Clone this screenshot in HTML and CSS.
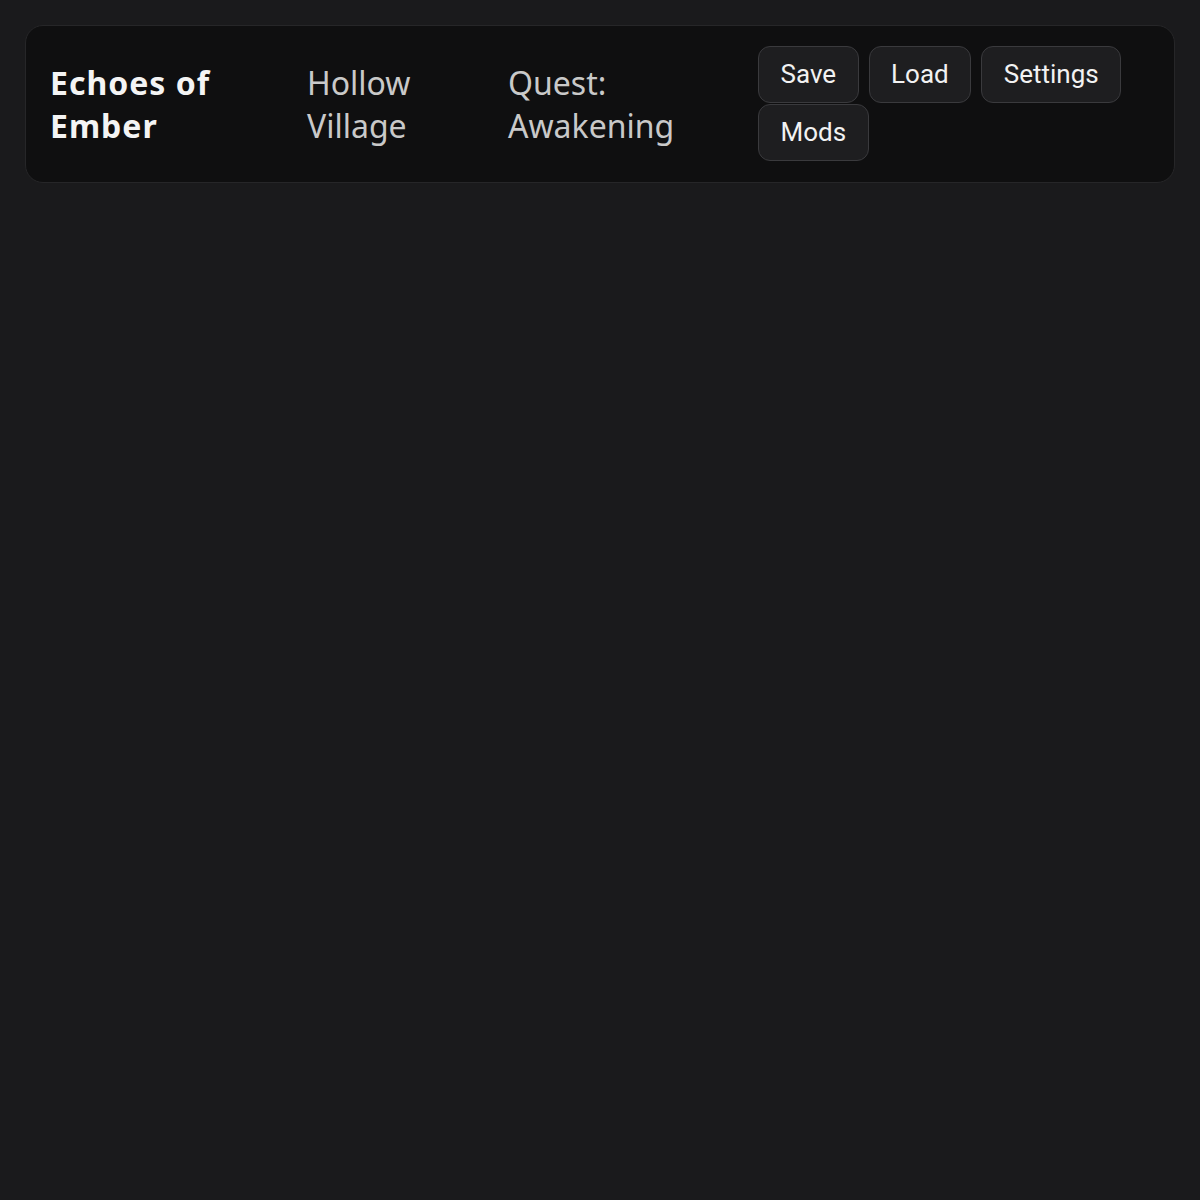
FILE: index.html
```html
<!DOCTYPE html>
<html lang="en">
<head>
<meta charset="utf-8">
<title>Echoes of Ember</title>
<link rel="stylesheet" href="styles.css">
</head>
<body>
<header class="topbar">
  <div class="title">Echoes of Ember</div>
  <div class="info">Hollow Village</div>
  <div class="info">Quest: Awakening</div>
  <nav class="actions">
    <button class="btn">Save</button>
    <button class="btn">Load</button>
    <button class="btn">Settings</button>
    <button class="btn">Mods</button>
  </nav>
</header>
</body>
</html>
```
FILE: styles.css
```css
html, body {
  margin: 0;
  padding: 0;
  background: #1a1a1c;
  height: 100%;
}
body {
  padding: 25px;
  box-sizing: border-box;
  font-family: "Noto Sans", "Open Sans", sans-serif;
}
.topbar {
  display: grid;
  grid-template-columns: 233px 177px 226px 1fr;
  column-gap: 24px;
  align-items: center;
  padding: 20px 24px 21px;
  background: #0f0f10;
  border: 1px solid #262628;
  border-radius: 18px;
}
.title {
  font-size: 32px;
  font-weight: 700;
  color: #f4f4f4;
  letter-spacing: 1px;
}
.info {
  font-size: 32px;
  color: #c9c9c9;
}
.actions {
  display: flex;
  flex-wrap: wrap;
  column-gap: 10px;
  row-gap: 1px;
}
.btn {
  font-family: Roboto, "Liberation Sans", sans-serif;
  font-size: 26px;
  line-height: 31px;
  color: #f2f2f2;
  background: #1e1e20;
  border: 1px solid #3a3a3d;
  border-radius: 12px;
  padding: 12px 21.5px;
}
```
